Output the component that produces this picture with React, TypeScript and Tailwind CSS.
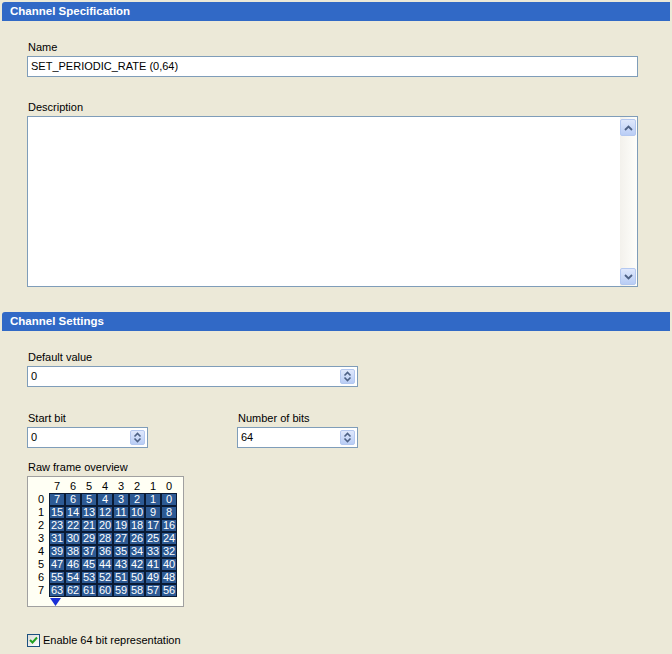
import React from 'react';

const font = { fontFamily: '"Liberation Sans", Arial, sans-serif' };

function SectionHeader({ title }: { title: string }) {
  return (
    <div className="mx-[2px] flex h-[19px] items-center rounded-tl-[3px] bg-[#3169c6] pl-[8px] pt-[1px] text-[11.5px] font-bold text-white">
      {title}
    </div>
  );
}

function SpinButton() {
  return (
    <div className="my-[2px] mr-[2px] flex w-[15px] flex-col items-center justify-center rounded-[2px] border border-[#b4c8f0] bg-gradient-to-b from-[#dfe8fc] to-[#b9cdf5]">
      <svg width="9" height="11" viewBox="0 0 9 11">
        <path d="M1.5 4.5 L4.5 1.5 L7.5 4.5" fill="none" stroke="#4d6185" strokeWidth="1.6" />
        <path d="M1.5 6.5 L4.5 9.5 L7.5 6.5" fill="none" stroke="#4d6185" strokeWidth="1.6" />
      </svg>
    </div>
  );
}

function SpinInput({ value, width }: { value: string; width: string }) {
  return (
    <div className={`flex h-[21px] border border-[#7f9db9] bg-white ${width}`}>
      <div className="flex flex-1 items-center pl-[3px] text-[11px] text-black">{value}</div>
      <SpinButton />
    </div>
  );
}

function ScrollArrow({ up }: { up: boolean }) {
  return (
    <div className="flex h-[17px] w-[16px] items-center justify-center rounded-[2px] border border-[#b4c8f0] bg-gradient-to-b from-[#dfe8fc] to-[#b9cdf5]">
      <svg width="9" height="6" viewBox="0 0 9 6">
        <path
          d={up ? 'M1 5 L4.5 1.5 L8 5' : 'M1 1 L4.5 4.5 L8 1'}
          fill="none"
          stroke="#4d6185"
          strokeWidth="1.8"
        />
      </svg>
    </div>
  );
}

function Label({ children }: { children: React.ReactNode }) {
  return <div className="mb-[2px] pl-[1px] text-[11px] leading-[14px] text-black">{children}</div>;
}

function FrameGrid() {
  const cols = [7, 6, 5, 4, 3, 2, 1, 0];
  return (
    <div className="h-[131px] w-[157px] border border-[#a0a0a0] bg-[#fffff4] pl-[10px] pt-[3px]">
      <div className="ml-[11px] flex h-[13px]">
        {cols.map((c) => (
          <div key={c} className="w-[16px] text-center text-[11px] leading-[13px] text-black">
            {c}
          </div>
        ))}
      </div>
      {cols
        .slice()
        .reverse()
        .map((row) => (
          <div key={row} className="flex h-[13px]">
            <div className="w-[11px] text-[11px] leading-[13px] text-black">{row}</div>
            {cols.map((c) => (
              <div
                key={c}
                className="flex h-[13px] w-[16px] items-center justify-center border border-[#0a1a33] bg-[#2d5a94] text-[11px] leading-[11px] text-white"
              >
                {row * 8 + c}
              </div>
            ))}
          </div>
        ))}
      <svg className="ml-[12px] mt-[1px]" width="11" height="8" viewBox="0 0 11 8">
        <path d="M0 0 H11 L5.5 8 Z" fill="#1a2fd6" />
      </svg>
    </div>
  );
}

export default function App() {
  return (
    <div className="h-[654px] w-[672px] bg-[#ece9d8] pt-[2px]" style={font}>
      <SectionHeader title="Channel Specification" />

      <div className="px-[27px] pt-[19px]">
        <Label>Name</Label>
        <div className="flex h-[21px] w-[611px] items-center border border-[#7f9db9] bg-white pl-[3px] text-[11px] text-black">
          SET_PERIODIC_RATE (0,64)
        </div>

        <div className="mt-[23px]">
          <Label>Description</Label>
          <div className="flex h-[171px] w-[611px] border border-[#7f9db9] bg-white">
            <div className="flex-1" />
            <div className="flex w-[17px] flex-col justify-between bg-gradient-to-r from-[#f3f1ec] to-[#fefefb] pb-[1px] pt-[2px]">
              <ScrollArrow up />
              <ScrollArrow up={false} />
            </div>
          </div>
        </div>
      </div>

      <div className="mt-[25px]">
        <SectionHeader title="Channel Settings" />
      </div>

      <div className="px-[27px] pt-[19px]">
        <Label>Default value</Label>
        <SpinInput value="0" width="w-[331px]" />

        <div className="mt-[24px] flex gap-[89px]">
          <div>
            <Label>Start bit</Label>
            <SpinInput value="0" width="w-[121px]" />
          </div>
          <div>
            <Label>Number of bits</Label>
            <SpinInput value="64" width="w-[121px]" />
          </div>
        </div>

        <div className="mt-[12px]">
          <Label>Raw frame overview</Label>
          <FrameGrid />
        </div>

        <div className="mt-[25px] flex items-center gap-[3px]">
          <div className="flex h-[13px] w-[13px] items-center justify-center border border-[#1c5180] bg-gradient-to-br from-[#dcdcd7] to-white">
            <svg width="9" height="8" viewBox="0 0 9 8">
              <path d="M1 4 L3.5 6.5 L8 1.5" fill="none" stroke="#21a121" strokeWidth="2" />
            </svg>
          </div>
          <span className="text-[11px] text-black">Enable 64 bit representation</span>
        </div>
      </div>
    </div>
  );
}
